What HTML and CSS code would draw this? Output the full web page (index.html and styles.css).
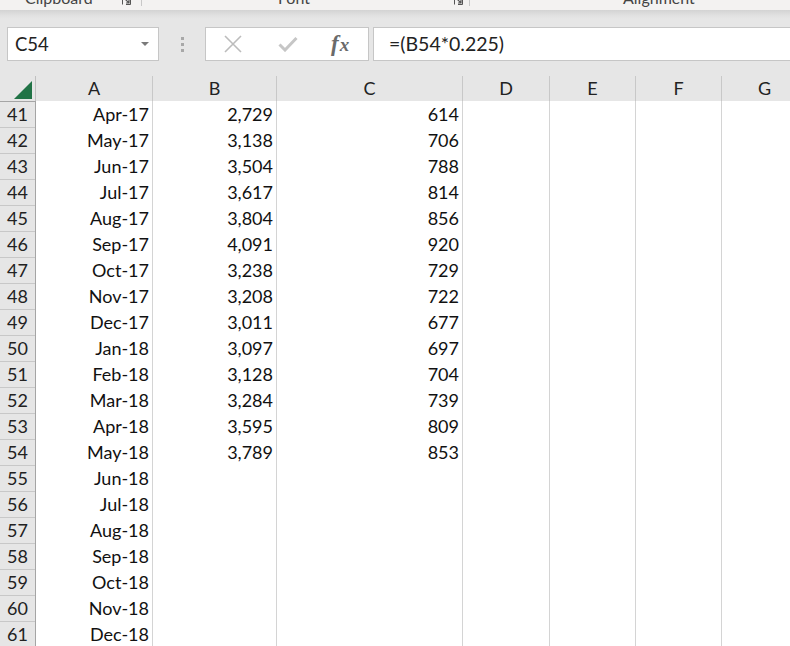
FILE: index.html
```html
<!DOCTYPE html>
<html>
<head>
<meta charset="utf-8">
<link rel="stylesheet" href="styles.css">
</head>
<body>
<div class="ribbon">
  <div class="group g1"><span class="glabel">Clipboard</span><svg class="launcher" width="9" height="9" viewBox="0 0 9 9"><path d="M0.5 0 V8.5 M0.5 0.5 H8.5 V8.5 H4" fill="none" stroke="#555" stroke-width="1"/><path d="M3 3 L7 7 M7 4 V7 H4" fill="none" stroke="#555" stroke-width="1.2"/></svg></div>
  <div class="sep"></div>
  <div class="group g2"><span class="glabel">Font</span><svg class="launcher l2" width="9" height="9" viewBox="0 0 9 9"><path d="M0.5 0 V8.5 M0.5 0.5 H8.5 V8.5 H4" fill="none" stroke="#555" stroke-width="1"/><path d="M3 3 L7 7 M7 4 V7 H4" fill="none" stroke="#555" stroke-width="1.2"/></svg></div>
  <div class="sep"></div>
  <div class="group g3"><span class="glabel">Alignment</span></div>
</div>
<div class="toolbar">
  <div class="namebox"><span>C54</span><svg class="dd" width="8" height="4" viewBox="0 0 8 4"><path d="M0 0 H8 L4 4 Z" fill="#7a7a7a"/></svg></div>
  <div class="dots"><i></i><i></i><i></i></div>
  <div class="fxbox">
    <svg class="ic-x" width="18" height="18" viewBox="0 0 18 18"><path d="M1 1 L17 17 M17 1 L1 17" stroke="#bcbcbc" stroke-width="1.6" fill="none"/></svg>
    <svg class="ic-ok" width="20" height="16" viewBox="0 0 20 16"><path d="M1.5 8.5 L7 14 L18.5 2" stroke="#c6c6c6" stroke-width="3" fill="none"/></svg>
    <span class="fx"><span class="fx-f">f</span>x</span>
  </div>
  <div class="formula">=(B54*0.225)</div>
</div>
<div class="sheet">
  <div class="row head">
    <div class="corner"><svg width="18" height="18" viewBox="0 0 18 18"><polygon points="18,0 18,18 0,18" fill="#217346"/></svg></div>
    <div class="ch">A</div><div class="ch">B</div><div class="ch">C</div><div class="ch">D</div><div class="ch">E</div><div class="ch">F</div><div class="ch">G</div>
  </div>
  <div class="row"><div class="rh">41</div><div class="c">Apr-17</div><div class="c">2,729</div><div class="c">614</div><div class="c"></div><div class="c"></div><div class="c"></div><div class="c"></div></div>
  <div class="row"><div class="rh">42</div><div class="c">May-17</div><div class="c">3,138</div><div class="c">706</div><div class="c"></div><div class="c"></div><div class="c"></div><div class="c"></div></div>
  <div class="row"><div class="rh">43</div><div class="c">Jun-17</div><div class="c">3,504</div><div class="c">788</div><div class="c"></div><div class="c"></div><div class="c"></div><div class="c"></div></div>
  <div class="row"><div class="rh">44</div><div class="c">Jul-17</div><div class="c">3,617</div><div class="c">814</div><div class="c"></div><div class="c"></div><div class="c"></div><div class="c"></div></div>
  <div class="row"><div class="rh">45</div><div class="c">Aug-17</div><div class="c">3,804</div><div class="c">856</div><div class="c"></div><div class="c"></div><div class="c"></div><div class="c"></div></div>
  <div class="row"><div class="rh">46</div><div class="c">Sep-17</div><div class="c">4,091</div><div class="c">920</div><div class="c"></div><div class="c"></div><div class="c"></div><div class="c"></div></div>
  <div class="row"><div class="rh">47</div><div class="c">Oct-17</div><div class="c">3,238</div><div class="c">729</div><div class="c"></div><div class="c"></div><div class="c"></div><div class="c"></div></div>
  <div class="row"><div class="rh">48</div><div class="c">Nov-17</div><div class="c">3,208</div><div class="c">722</div><div class="c"></div><div class="c"></div><div class="c"></div><div class="c"></div></div>
  <div class="row"><div class="rh">49</div><div class="c">Dec-17</div><div class="c">3,011</div><div class="c">677</div><div class="c"></div><div class="c"></div><div class="c"></div><div class="c"></div></div>
  <div class="row"><div class="rh">50</div><div class="c">Jan-18</div><div class="c">3,097</div><div class="c">697</div><div class="c"></div><div class="c"></div><div class="c"></div><div class="c"></div></div>
  <div class="row"><div class="rh">51</div><div class="c">Feb-18</div><div class="c">3,128</div><div class="c">704</div><div class="c"></div><div class="c"></div><div class="c"></div><div class="c"></div></div>
  <div class="row"><div class="rh">52</div><div class="c">Mar-18</div><div class="c">3,284</div><div class="c">739</div><div class="c"></div><div class="c"></div><div class="c"></div><div class="c"></div></div>
  <div class="row"><div class="rh">53</div><div class="c">Apr-18</div><div class="c">3,595</div><div class="c">809</div><div class="c"></div><div class="c"></div><div class="c"></div><div class="c"></div></div>
  <div class="row"><div class="rh">54</div><div class="c">May-18</div><div class="c">3,789</div><div class="c">853</div><div class="c"></div><div class="c"></div><div class="c"></div><div class="c"></div></div>
  <div class="row"><div class="rh">55</div><div class="c">Jun-18</div><div class="c"></div><div class="c"></div><div class="c"></div><div class="c"></div><div class="c"></div><div class="c"></div></div>
  <div class="row"><div class="rh">56</div><div class="c">Jul-18</div><div class="c"></div><div class="c"></div><div class="c"></div><div class="c"></div><div class="c"></div><div class="c"></div></div>
  <div class="row"><div class="rh">57</div><div class="c">Aug-18</div><div class="c"></div><div class="c"></div><div class="c"></div><div class="c"></div><div class="c"></div><div class="c"></div></div>
  <div class="row"><div class="rh">58</div><div class="c">Sep-18</div><div class="c"></div><div class="c"></div><div class="c"></div><div class="c"></div><div class="c"></div><div class="c"></div></div>
  <div class="row"><div class="rh">59</div><div class="c">Oct-18</div><div class="c"></div><div class="c"></div><div class="c"></div><div class="c"></div><div class="c"></div><div class="c"></div></div>
  <div class="row"><div class="rh">60</div><div class="c">Nov-18</div><div class="c"></div><div class="c"></div><div class="c"></div><div class="c"></div><div class="c"></div><div class="c"></div></div>
  <div class="row"><div class="rh">61</div><div class="c">Dec-18</div><div class="c"></div><div class="c"></div><div class="c"></div><div class="c"></div><div class="c"></div><div class="c"></div></div>
</div>
</body>
</html>
```
FILE: styles.css
```css
html, body {
  margin: 0;
  padding: 0;
  width: 790px;
  height: 646px;
  overflow: hidden;
  background: #e6e6e6;
  font-family: Lato, "Liberation Sans", sans-serif;
  color: #111;
}

.ribbon {
  height: 10px;
  background: #f3f2f1;
  display: flex;
  overflow: hidden;
}
.group {
  display: flex;
  align-items: flex-start;
  height: 10px;
}
.g1 { width: 141px; padding-left: 25px; box-sizing: border-box; }
.g2 { width: 327px; padding-left: 136px; box-sizing: border-box; }
.g3 { flex: 1; padding-left: 153px; }
.glabel {
  font-size: 16px;
  line-height: 16px;
  margin-top: -10px;
  color: #444;
  white-space: nowrap;
}
.launcher {
  margin-left: auto;
  margin-right: 10px;
  margin-top: -4px;
}
.l2 { margin-right: 6px; }
.sep {
  width: 1px;
  height: 6px;
  background: #c8c8c8;
}

.toolbar {
  display: flex;
  align-items: center;
  padding: 17px 0 0 7px;
  height: 34px;
  background: linear-gradient(#d3d3d3, #e0e0e0 5px, #e6e6e6 9px);
}
.namebox {
  width: 152px;
  height: 34px;
  box-sizing: border-box;
  background: #fff;
  border: 1px solid #c6c6c6;
  display: flex;
  align-items: center;
  padding: 0 8px 0 7px;
  font-size: 18.5px;
  color: #222;
}
.namebox span { flex: 1; }
.dd { margin-right: 1px; }
.dots {
  width: 46px;
  display: flex;
  flex-direction: column;
  align-items: center;
  gap: 3px;
}
.dots i {
  display: block;
  width: 3px;
  height: 3px;
  background: #a8a8a8;
}
.fxbox {
  width: 164px;
  height: 34px;
  box-sizing: border-box;
  background: #fff;
  border: 1px solid #c6c6c6;
  display: flex;
  align-items: center;
  padding-left: 18px;
}
.ic-x { margin-right: 36px; }
.ic-ok { margin-right: 33px; }
.fx {
  font-family: "Liberation Serif", serif;
  font-style: italic;
  font-weight: bold;
  font-size: 19px;
  color: #6a6a6a;
}
.fx-f {
  font-size: 23px;
  margin-right: 1px;
}
.formula {
  flex: 1;
  margin-left: 4px;
  height: 34px;
  box-sizing: border-box;
  background: #fff;
  border: 1px solid #c6c6c6;
  border-right: none;
  padding-left: 15px;
  font-size: 19.5px;
  line-height: 32px;
  color: #222;
}

.sheet {
  margin-top: 15px;
}
.row {
  display: grid;
  grid-template-columns: 36px 117px 124px 186px 87px 86px 86px 86px;
  height: 26px;
}
.row.head { height: 25px; }
.corner {
  box-sizing: border-box;
  border-right: 1px solid #c0c0c0;
  border-bottom: 1px solid #a5a5a5;
  display: flex;
  justify-content: flex-end;
  align-items: flex-end;
  padding: 0 3px 2px 0;
}
.ch {
  box-sizing: border-box;
  border-right: 1px solid #c8c8c8;
  border-bottom: 1px solid #a5a5a5;
  text-align: center;
  font-size: 18px;
  line-height: 25px;
  color: #222;
}
.rh {
  box-sizing: border-box;
  border-right: 1px solid #a5a5a5;
  border-bottom: 1px solid #c8c8c8;
  padding-left: 7px;
  font-size: 18px;
  line-height: 26px;
  color: #222;
}
.c {
  box-sizing: border-box;
  background: #fff;
  border-right: 1px solid #d4d4d4;
  border-bottom: 1px solid #d4d4d4;
  text-align: right;
  padding-right: 3px;
  font-size: 18px;
  line-height: 26px;
  color: #111;
  white-space: nowrap;
}
```
